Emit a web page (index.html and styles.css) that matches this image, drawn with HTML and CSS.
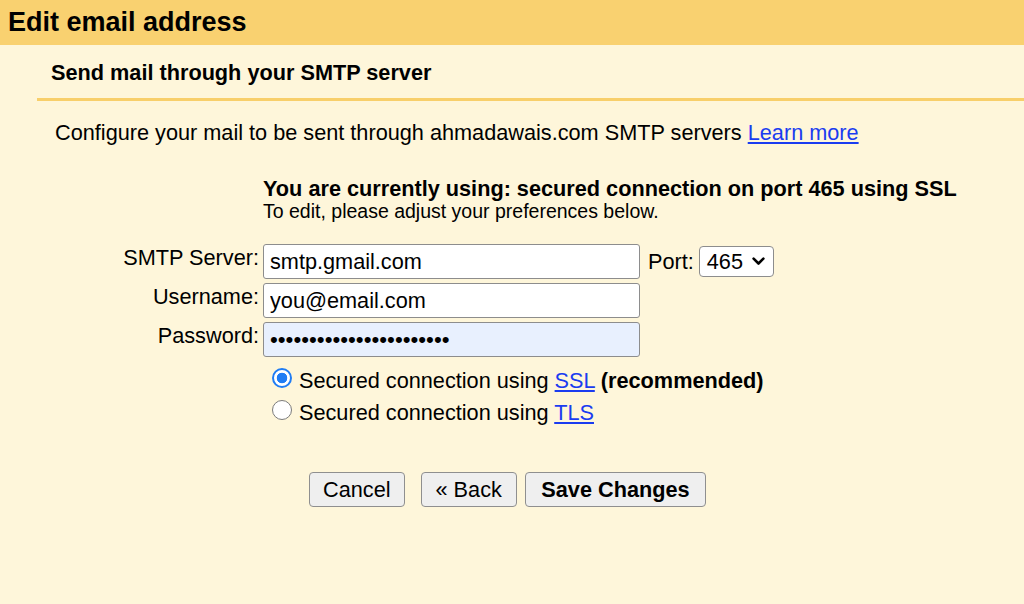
FILE: index.html
```html
<!DOCTYPE html>
<html lang="en">
<head>
<meta charset="utf-8">
<title>Edit email address</title>
<link rel="stylesheet" href="styles.css">
</head>
<body>
<header class="topbar">
  <h1 class="title">Edit email address</h1>
</header>
<main class="content">
  <h2 class="subtitle">Send mail through your SMTP server</h2>
  <div class="rule"></div>
  <p class="intro">Configure your mail to be sent through ahmadawais.com SMTP servers <a href="#" class="link">Learn more</a></p>

  <div class="form">
    <div class="notice">
      <div class="notice-main">You are currently using: secured connection on port 465 using SSL</div>
      <div class="notice-sub">To edit, please adjust your preferences below.</div>
    </div>

    <label class="label" for="server">SMTP Server:</label>
    <div class="field">
      <input class="text-input" id="server" type="text" value="smtp.gmail.com">
      <span class="port-label">Port:</span>
      <div class="select">
        <span>465</span>
        <svg class="chevron" width="13" height="9" viewBox="0 0 13 9" aria-hidden="true"><path d="M1.6 1.6 L6.5 6.5 L11.4 1.6" fill="none" stroke="#000" stroke-width="2.6" stroke-linecap="round" stroke-linejoin="round"/></svg>
      </div>
    </div>

    <label class="label" for="username">Username:</label>
    <div class="field">
      <input class="text-input" id="username" type="text" value="you@email.com">
    </div>

    <label class="label" for="password">Password:</label>
    <div class="field">
      <input class="text-input autofill" id="password" type="password" value="abcdefghijklmnopqrstuvw">
    </div>

    <div class="radios">
      <label class="radio-row">
        <input class="radio" type="radio" name="sec" checked>
        <span>Secured connection using <a href="#" class="link">SSL</a> <b>(recommended)</b></span>
      </label>
      <label class="radio-row">
        <input class="radio" type="radio" name="sec">
        <span>Secured connection using <a href="#" class="link">TLS</a></span>
      </label>
    </div>

    <div class="buttons">
      <button class="btn btn-cancel" type="button">Cancel</button>
      <button class="btn btn-back" type="button">« Back</button>
      <button class="btn btn-primary" type="button">Save Changes</button>
    </div>
  </div>
</main>
</body>
</html>
```

FILE: styles.css
```css
html, body {
  margin: 0;
  padding: 0;
}
body {
  background: #fef6da;
  font-family: "Liberation Sans", Arial, sans-serif;
  color: #000;
  width: 1024px;
  height: 604px;
  overflow: hidden;
}
.topbar {
  background: #f9d170;
  height: 45px;
}
.title {
  margin: 0;
  padding-left: 8px;
  font-size: 27px;
  font-weight: bold;
  line-height: 45px;
}
.subtitle {
  margin: 15px 0 0 0;
  padding-left: 51px;
  font-size: 21.7px;
  font-weight: bold;
  line-height: 25px;
}
.rule {
  margin: 13px 0 0 37px;
  height: 3px;
  background: #f8cf6a;
}
.intro {
  margin: 19px 0 0 55px;
  font-size: 21.7px;
  line-height: 25px;
}
.link {
  color: #1a3cf0;
  text-decoration: underline;
}
.form {
  margin-top: 32px;
  display: grid;
  grid-template-columns: 259px 1fr;
  column-gap: 4px;
  row-gap: 4px;
  align-items: center;
  font-size: 21.7px;
}
.notice {
  grid-column: 2;
  margin-bottom: 18px;
}
.notice-main {
  font-weight: bold;
  line-height: 23px;
}
.notice-sub {
  font-size: 19.5px;
  line-height: 22px;
}
.label {
  grid-column: 1;
  text-align: right;
  line-height: 28px;
  align-self: start;
}
.field {
  grid-column: 2;
  display: flex;
  align-items: center;
  height: 35px;
}
.text-input {
  box-sizing: border-box;
  width: 377px;
  height: 35px;
  margin: 0;
  padding: 0 6px;
  border: 1px solid #8d8d8d;
  border-radius: 3px;
  background: #fff;
  font-family: "Liberation Sans", Arial, sans-serif;
  font-size: 21.7px;
  color: #000;
  outline: none;
}
.text-input.autofill {
  background: #e8f0fe;
  font-size: 22.3px;
  letter-spacing: 0;
}
.port-label {
  margin-left: 8px;
  line-height: 35px;
}
.select {
  box-sizing: border-box;
  margin-left: 5px;
  width: 75px;
  height: 31px;
  border: 1px solid #8d8d8d;
  border-radius: 4px;
  background: #fff;
  display: flex;
  align-items: center;
  padding-left: 7px;
  line-height: 29px;
}
.chevron {
  margin-left: auto;
  margin-right: 8px;
}
.radios {
  grid-column: 2;
  margin-top: 4px;
  padding-left: 9px;
  display: flex;
  flex-direction: column;
}
.radio-row {
  display: flex;
  align-items: center;
  height: 32px;
  line-height: 32px;
}
.radio {
  appearance: none;
  -webkit-appearance: none;
  box-sizing: border-box;
  width: 20px;
  height: 20px;
  margin: 0 7px 6px 0;
  border: 1px solid #7b7b7b;
  border-radius: 50%;
  background: #fff;
  flex: none;
}
.radio:checked {
  border: 2px solid #1f7cf4;
  background: radial-gradient(circle, #1f7cf4 0 5px, #fff 5.6px);
}
.buttons {
  grid-column: 2;
  margin-top: 39px;
  padding-left: 46px;
  display: flex;
  gap: 8px;
}
.btn {
  box-sizing: border-box;
  height: 35px;
  margin: 0;
  padding: 0 13px;
  border: 1px solid #8f8f8f;
  border-radius: 4px;
  background: #efefef;
  font-family: "Liberation Sans", Arial, sans-serif;
  font-size: 21.7px;
  color: #000;
}
.btn-cancel {
  margin-right: 8px;
}
.btn-back {
  padding: 0 14px;
}
.btn-primary {
  font-weight: bold;
  padding: 0 15.5px;
}
```
